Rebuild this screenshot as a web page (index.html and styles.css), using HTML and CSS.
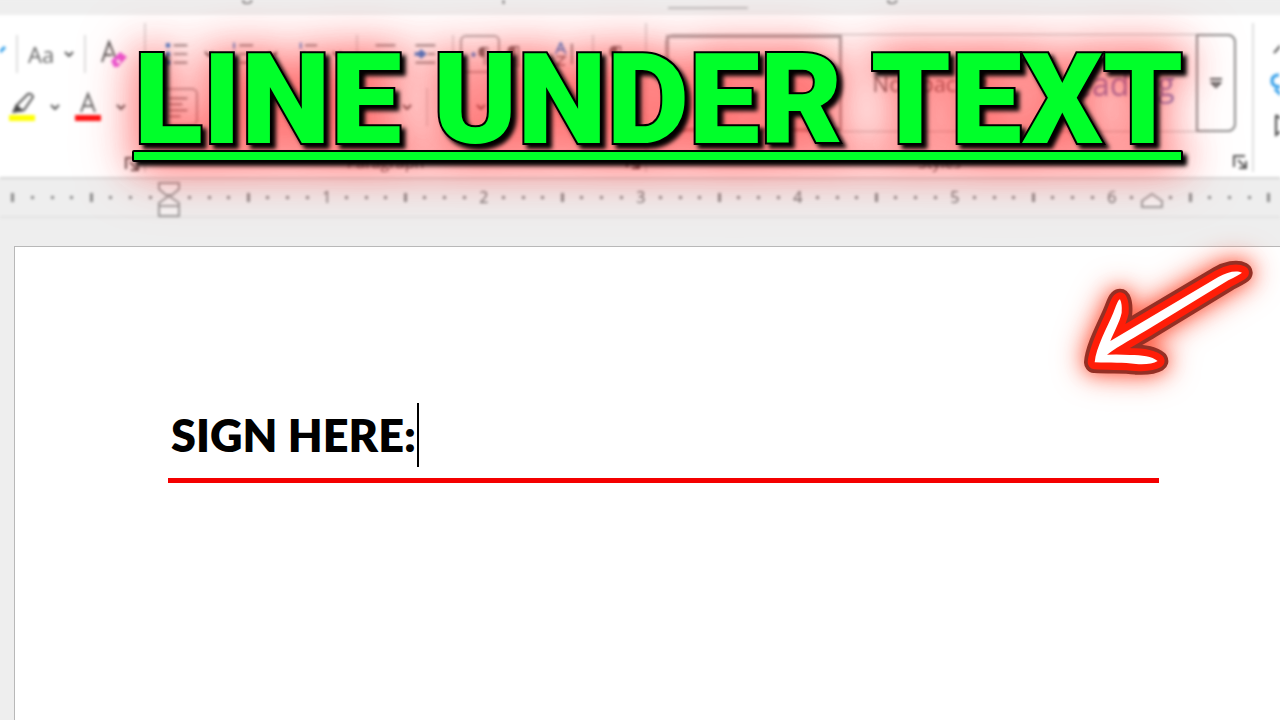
FILE: index.html
```html
<!DOCTYPE html>
<html lang="en">
<head>
    <meta charset="UTF-8">
    <meta name="viewport" content="width=device-width, initial-scale=1.0">
    <title>Line Under Text</title>
    <link rel="stylesheet" href="styles.css">
</head>
<body>
    <header class="toolbar">
        <nav class="tabs">
            <span>g</span>
            <span>p</span>
            <span class="active"></span>
            <span>g</span>
        </nav>

        <div class="ribbon">
            <section class="group font-group">
                <div class="row">
                    <svg class="clip-icon" width="6" height="16" viewBox="0 0 6 16"><path d="M0 6L5 1" stroke="#2b9be8" stroke-width="3"/></svg>
                    <span class="divider"></span>
                    <button class="tool case">Aa</button>
                    <svg class="chevron" viewBox="0 0 10 6"><path d="M1 1l4 4 4-4"/></svg>
                    <span class="divider"></span>
                    <button class="tool clear" aria-label="Clear formatting">
                        <svg width="28" height="30" viewBox="0 0 28 30"><path d="M2 23L9 3l6 15M5 16h7" fill="none" stroke="#555" stroke-width="2"/><path d="M11 22l9-9 7 5-9 10h-4z" fill="#e858dc"/><path d="M17 21l3 3" stroke="#fff" stroke-width="3"/></svg>
                    </button>
                </div>
                <div class="row second">
                    <button class="tool" aria-label="Highlight">
                        <svg width="28" height="32" viewBox="0 0 28 32"><path d="M9 14L20 3q4-1 5 3l-9 13-8 1z" fill="none" stroke="#555" stroke-width="2"/><path d="M8 13l8 7-12 2z" fill="#444"/><path d="M1 24h26v6H1z" fill="#ff0"/></svg>
                    </button>
                    <svg class="chevron" viewBox="0 0 10 6"><path d="M1 1l4 4 4-4"/></svg>
                    <button class="tool" aria-label="Font color">
                        <svg width="28" height="32" viewBox="0 0 28 32"><path d="M7 21l7-18 7 18M9 15h10" fill="none" stroke="#666" stroke-width="2"/><path d="M1 24h26v6H1z" fill="#f11"/></svg>
                    </button>
                    <svg class="chevron" viewBox="0 0 10 6"><path d="M1 1l4 4 4-4"/></svg>
                </div>
                <div class="group-name"><span></span><svg class="launcher" viewBox="0 0 16 16"><path d="M2 13V2h11M6 6l7 7M14 7v7H7"/></svg></div>
            </section>

            <section class="group paragraph-group">
                <div class="row">
                    <svg class="list" viewBox="0 0 28 28"><path class="blue" d="M1 4h5M1 14h5M1 24h5" stroke-width="5"/><path d="M10 4h16M10 14h16M10 24h16"/></svg>
                    <svg class="chevron" viewBox="0 0 10 6"><path d="M1 1l4 4 4-4"/></svg>
                    <svg class="list" viewBox="0 0 28 28"><path class="blue" d="M6 1v7M6 11v7M6 21v6"/><path d="M12 4h16M12 14h16M12 24h16"/></svg>
                    <svg class="chevron" viewBox="0 0 10 6"><path d="M1 1l4 4 4-4"/></svg>
                    <svg class="list" viewBox="0 0 28 28"><path class="blue" d="M9 1v7M13 11v7"/><path d="M14 4h14M18 14h10M21 24h7"/></svg>
                    <svg class="chevron" viewBox="0 0 10 6"><path d="M1 1l4 4 4-4"/></svg>
                    <span class="divider"></span>
                    <svg class="list" viewBox="0 0 28 28"><path d="M3 4h23M14 14h12M3 24h23"/><path class="blue" d="M10 14H3"/></svg>
                    <svg class="list" viewBox="0 0 28 28"><path d="M3 4h23M17 14h9M3 24h23"/><path class="blue" d="M2 14h10M8 10l5 4-5 4" stroke-width="4"/></svg>
                    <span class="divider"></span>
                    <div class="marks-tools">
                        <button class="tool boxed" aria-label="Show marks"><span class="mark">•</span>¶</button>
                        <span class="pilcrow">¶</span>
                    </div>
                    <svg class="list" viewBox="0 0 28 28"><path class="blue" d="M3 14L9 1l6 13M5 9h8"/><path d="M4 17h10L4 27h10M22 2v24"/></svg>
                    <span class="divider"></span>
                    <span class="pilcrow">¶</span>
                </div>
                <div class="row second">
                    <button class="tool boxed" aria-label="Align left">
                        <svg class="list" viewBox="0 0 28 28"><path d="M3 4h22M3 11h16M3 18h22M3 25h14"/></svg>
                    </button>
                    <span class="space"></span>
                    <svg class="chevron" viewBox="0 0 10 6"><path d="M1 1l4 4 4-4"/></svg>
                    <span class="divider"></span>
                    <span class="gap"></span>
                    <svg class="chevron" viewBox="0 0 10 6"><path d="M1 1l4 4 4-4"/></svg>
                </div>
                <div class="group-name"><span>Paragraph</span><svg class="launcher" viewBox="0 0 16 16"><path d="M2 13V2h11M6 6l7 7M14 7v7H7"/></svg></div>
            </section>

            <section class="group styles-group">
                <div class="gallery">
                    <button class="style selected" aria-label="Normal"></button>
                    <button class="style no-spacing">No Spacing</button>
                    <button class="style heading">Heading</button>
                    <button class="more" aria-label="More styles">
                        <svg width="12" height="12" viewBox="0 0 12 12"><path d="M0 2h12M2 6h8l-4 4z" fill="none" stroke="#555" stroke-width="2"/></svg>
                    </button>
                </div>
                <div class="group-name"><span>Styles</span><svg class="launcher" viewBox="0 0 16 16"><path d="M2 13V2h11M6 6l7 7M14 7v7H7"/></svg></div>
            </section>

            <section class="editing-group">
                <svg width="27" height="100" viewBox="0 0 27 100"><path d="M20 14l7-8 5 3" fill="none" stroke="#555" stroke-width="2"/><path d="M25 36q-7 0-7 6t9 6M21 50l6 6" fill="none" stroke="#2b9be8" stroke-width="3"/><path d="M22 76v20l10-8M22 76l10 8" fill="none" stroke="#444" stroke-width="2"/></svg>
            </section>
        </div>

        <div class="ruler">
            <div class="marks" id="marks"></div>
            <svg class="indent-left" viewBox="0 0 22 36"><path d="M1 1h20v6l-7 6H8L1 7zM11 14l10 7v13H1V21zM1 24h20"/></svg>
            <svg class="indent-right" viewBox="0 0 22 16"><path d="M11 1l10 7v6H1V8z"/></svg>
        </div>
    </header>

    <h1 class="title">LINE UNDER TEXT</h1>

    <main class="page">
        <p class="sign-line">SIGN HERE:<span class="caret"></span></p>
        <svg class="arrow" viewBox="0 0 690 540">
            <defs>
                <path id="arrow-shape" d="M576 128C560 120 532 125 505 141L181 333C190 309 209 277 215 248Q217 222 210 208C203 211 198 229 190 248C172 291 138 352 134 397C185 400 220 397 258 402Q302 405 323 393C306 379 276 375 240 375Q205 372 171 374C207 346 260 319 302 293L535 151Q565 136 576 128Z"/>
            </defs>
            <use href="#arrow-shape" class="arrow-edge"/>
            <use href="#arrow-shape" class="arrow-red"/>
            <use href="#arrow-shape" class="arrow-core"/>
        </svg>
    </main>

    <script>
        const marks = document.getElementById('marks');

        // Eight marks per inch, the numbers start two inches in
        for (let inch = 0; inch < 17; inch++) {
            const cell = document.createElement('div');
            cell.className = 'inch';
            for (let i = 0; i < 8; i++) {
                const mark = document.createElement('span');
                if (i === 0 && inch > 1 && inch < 8) {
                    mark.textContent = inch - 1;
                } else if (i === 0 && inch === 1) {
                    mark.className = 'empty';
                } else {
                    mark.className = i % 4 === 0 ? 'tick' : 'dot';
                }
                cell.appendChild(mark);
            }
            marks.appendChild(cell);
        }
    </script>
</body>
</html>
```
FILE: styles.css
```css
* {
    box-sizing: border-box;
}

body {
    margin: 0;
    min-height: 100vh;
    display: flex;
    flex-direction: column;
    position: relative;
    overflow: hidden;
    background-color: #eeeeee;
    font-family: "Open Sans", sans-serif;
    color: #666;
}

button {
    font: inherit;
    color: inherit;
    background: none;
    border: none;
    padding: 0;
}

.toolbar {
    margin: 0 -8px;
    padding: 0 8px;
    background: linear-gradient(#eee 15px, #fff 15px, #fff 178px, #eee 178px);
    filter: blur(1.4px);
}

.tabs {
    height: 15px;
    display: flex;
    overflow: hidden;
    padding-left: 242px;
    font-size: 20px;
    line-height: 0;
}

.tabs span {
    width: 259px;
    margin-top: -8px;
}

.tabs .active {
    width: 80px;
    height: 2px;
    margin: 7px 139px 0 -92px;
    background-color: #bbb;
}

.ribbon {
    display: flex;
    height: 164px;
    padding: 8px 0 5px;
    background-color: #fff;
    border-bottom: 2px solid #d4d4d4;
}

.group {
    display: flex;
    flex-direction: column;
    border-right: 2px solid #ddd;
}

.font-group {
    width: 146px;
}

.paragraph-group {
    width: 501px;
}

.styles-group {
    flex: 1;
    padding-top: 11px;
}

.editing-group {
    width: 26px;
    padding-top: 16px;
    overflow: hidden;
}

.row {
    display: flex;
    align-items: center;
    height: 62px;
}

.font-group .row {
    gap: 10px;
}

.font-group .second {
    height: 44px;
    gap: 14px;
    padding-left: 8px;
}

.paragraph-group .row {
    gap: 14px;
    padding-left: 18px;
}

.paragraph-group .second {
    height: 44px;
    padding-left: 12px;
}

.tool {
    flex-shrink: 0;
    display: flex;
    align-items: center;
    justify-content: center;
}

.case {
    font-size: 22px;
}

.clear {
    padding-left: 4px;
}

.boxed {
    width: 40px;
    height: 38px;
    border: 2px solid #aaa;
    border-radius: 6px;
    font-size: 20px;
}

.marks-tools {
    display: flex;
    align-items: center;
    gap: 6px;
    margin-left: -8px;
    padding-right: 12px;
}

.mark {
    color: #3a8fe0;
}

.pilcrow {
    width: 20px;
    font-size: 24px;
}

.divider {
    flex-shrink: 0;
    width: 2px;
    height: 38px;
    background-color: #ddd;
}

.space {
    width: 176px;
}

.gap {
    width: 20px;
}

.chevron {
    flex-shrink: 0;
    width: 10px;
    height: 6px;
    fill: none;
    stroke: #555;
    stroke-width: 2;
}

.list {
    flex-shrink: 0;
    width: 26px;
    height: 24px;
    fill: none;
    stroke: #777;
    stroke-width: 2;
}

.list .blue {
    stroke: #2b7fd4;
}

.group-name {
    display: flex;
    align-items: center;
    margin-top: auto;
    padding-right: 4px;
    font-size: 16px;
    line-height: 20px;
}

.group-name span {
    flex: 1;
    text-align: center;
}

.launcher {
    width: 16px;
    height: 16px;
    fill: none;
    stroke: #555;
    stroke-width: 2;
}

.gallery {
    display: flex;
    height: 98px;
    margin: 0 16px 0 18px;
    border: 1px solid #bbb;
    border-radius: 8px;
}

.style {
    flex: 1;
    font-size: 22px;
    white-space: nowrap;
    overflow: hidden;
}

.selected,
.no-spacing {
    flex: 0 0 176px;
}

.selected {
    border: 3px solid #aaa;
}

.heading {
    padding-left: 10px;
    font-size: 32px;
    color: #7080c8;
}

.more {
    width: 40px;
    margin: -1px;
    border: 2px solid #888;
    border-radius: 0 8px 8px 0;
}

.ruler {
    position: relative;
    height: 39px;
    border-bottom: 2px solid #e2e2e2;
}

.marks {
    display: flex;
    height: 36px;
    padding-left: 3px;
    overflow: hidden;
}

.inch {
    flex: 0 0 157px;
    display: flex;
    align-items: center;
}

.inch span {
    flex: 1 0 0;
    text-align: center;
    font-size: 16px;
}

.tick::before,
.dot::before {
    content: "";
    display: block;
    width: 3px;
    height: 3px;
    margin: 0 auto;
    background-color: #888;
}

.tick::before {
    height: 9px;
}

.indent-left,
.indent-right {
    position: absolute;
    left: 158px;
    top: 3px;
    width: 22px;
    height: 36px;
    fill: #f4f4f4;
    stroke: #999;
    stroke-width: 2;
}

/* .toolbar is 8px wider than the window on each side */
.indent-right {
    left: auto;
    right: 117px;
    top: 14px;
    height: 16px;
}

/* Headline laid over the ribbon */
.title {
    position: absolute;
    top: 38px;
    left: 132px;
    margin: 0;
    padding: 0 0 0 2px;
    font-family: Roboto, sans-serif;
    font-size: 127px;
    font-weight: 900;
    line-height: 124px;
    white-space: nowrap;
    color: #00ff2a;
    -webkit-text-stroke: 4px #000;
    paint-order: stroke fill;
    filter: drop-shadow(4px 4px 2px #000) drop-shadow(0 0 16px rgba(255, 50, 50, 0.4)) drop-shadow(0 0 26px rgba(255, 50, 50, 0.6));
}

.title::after {
    content: "";
    position: absolute;
    left: 0;
    right: 0;
    bottom: 0;
    height: 8px;
    background-color: #00ff2a;
    border: 2px solid #000;
    border-radius: 2px;
}

.page {
    flex: 1;
    position: relative;
    margin: 28px 0 0 14px;
    padding: 156px 121px 0 153px;
    background-color: #fff;
    border-top: 1px solid #b8b8b8;
    border-left: 1px solid #b8b8b8;
}

.sign-line {
    display: flex;
    align-items: center;
    margin: 0;
    padding: 0 0 11px 3px;
    border-bottom: 5px solid #f40000;
    font-family: Lato, sans-serif;
    font-size: 45px;
    font-weight: 800;
    line-height: 64px;
    color: #000;
}

.caret {
    width: 2px;
    height: 64px;
    margin-left: 1px;
    background-color: #000;
}

.arrow {
    position: absolute;
    top: -17px;
    right: 0;
    width: 230px;
    height: 180px;
    overflow: visible;
    stroke-linejoin: round;
    filter: drop-shadow(0 0 8px rgba(255, 60, 30, 0.5)) drop-shadow(0 0 14px rgba(255, 60, 30, 0.7));
}

.arrow-edge {
    fill: #943025;
    stroke: #943025;
    stroke-width: 64;
}

.arrow-red {
    fill: #ff1d08;
    stroke: #ff1d08;
    stroke-width: 42;
}

.arrow-core {
    fill: #fff;
}
```
